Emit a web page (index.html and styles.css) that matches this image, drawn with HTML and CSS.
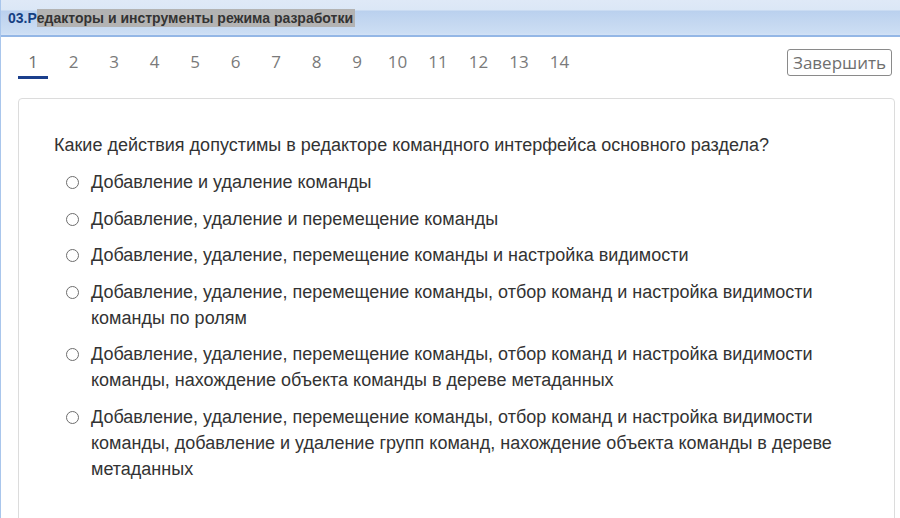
FILE: index.html
```html
<!DOCTYPE html>
<html lang="ru">
<head>
<meta charset="utf-8">
<link rel="stylesheet" href="styles.css">
</head>
<body>
<div class="frame">
  <div class="header">
    <div class="title"><span class="num">03.Р</span><span class="hl">едакторы и инструменты режима разработки</span></div>
  </div>
  <div class="nav">
    <div class="tabs">
      <span class="tab active">1</span>
      <span class="tab">2</span>
      <span class="tab">3</span>
      <span class="tab">4</span>
      <span class="tab">5</span>
      <span class="tab">6</span>
      <span class="tab">7</span>
      <span class="tab">8</span>
      <span class="tab">9</span>
      <span class="tab">10</span>
      <span class="tab">11</span>
      <span class="tab">12</span>
      <span class="tab">13</span>
      <span class="tab">14</span>
    </div>
    <button class="finish">Завершить</button>
  </div>
  <div class="card">
    <div class="question">Какие действия допустимы в редакторе командного интерфейса основного раздела?</div>
    <ul class="options">
      <li class="opt"><span class="radio"></span><span class="text">Добавление и удаление команды</span></li>
      <li class="opt"><span class="radio"></span><span class="text">Добавление, удаление и перемещение команды</span></li>
      <li class="opt"><span class="radio"></span><span class="text">Добавление, удаление, перемещение команды и настройка видимости</span></li>
      <li class="opt"><span class="radio"></span><span class="text">Добавление, удаление, перемещение команды, отбор команд и настройка видимости команды по ролям</span></li>
      <li class="opt"><span class="radio"></span><span class="text">Добавление, удаление, перемещение команды, отбор команд и настройка видимости команды, нахождение объекта команды в дереве метаданных</span></li>
      <li class="opt"><span class="radio"></span><span class="text">Добавление, удаление, перемещение команды, отбор команд и настройка видимости команды, добавление и удаление групп команд, нахождение объекта команды в дереве метаданных</span></li>
    </ul>
  </div>
</div>
</body>
</html>
```
FILE: styles.css
```css
html, body {
  margin: 0;
  padding: 0;
  background: #fff;
  overflow: hidden;
}
.frame {
  width: 900px;
  height: 518px;
  border-left: 1px solid #a9c6ec;
  box-sizing: border-box;
}
.header {
  height: 37px;
  box-sizing: border-box;
  border-bottom: 2px solid #94b7e6;
  background: linear-gradient(to bottom, #dfe9f7 0, #dbe7f6 10px, #b9d0ee 11px, #bcd2ef 13px, #c6d9f1 25px, #ccdef4 33px, #d4e3f6 35px);
  display: flex;
  align-items: flex-start;
  padding: 9px 0 0 7px;
}
.title {
  font-family: "Liberation Sans", Arial, sans-serif;
  font-weight: bold;
  font-size: 14px;
  line-height: 18px;
  display: flex;
}
.num {
  color: #153f82;
}
.hl {
  background: #b3b3b3;
  color: #333;
  padding-right: 2px;
}
.nav {
  display: flex;
  justify-content: space-between;
  align-items: flex-start;
  padding: 13px 8px 0 17px;
  height: 61px;
  box-sizing: border-box;
}
.tabs {
  display: flex;
  gap: 10.5px;
}
.tab {
  width: 30px;
  text-align: center;
  font-family: "Open Sans", sans-serif;
  font-size: 17px;
  line-height: 24px;
  color: #7a7a7a;
  padding-bottom: 2px;
  border-bottom: 3px solid transparent;
}
.tab.active {
  border-bottom-color: #1b3f8c;
  color: #6e6e6e;
}
.finish {
  font-family: "Open Sans", sans-serif;
  font-size: 17px;
  color: #6f6f6f;
  background: #fff;
  border: 1px solid #8a8a8a;
  border-radius: 3px;
  height: 27px;
  padding: 0 5px;
  line-height: 23px;
  margin: -1px 0 0;
}
.card {
  margin-left: 17px;
  width: 877px;
  height: 430px;
  box-sizing: border-box;
  border: 1px solid #dcdcdc;
  border-radius: 4px;
  padding: 33px 20px 0 35px;
  font-family: "Liberation Sans", Arial, sans-serif;
  color: #333;
  font-size: 18px;
}
.question {
  line-height: 26px;
  margin-bottom: 11px;
}
.options {
  list-style: none;
  margin: 0;
  padding: 0 0 0 11px;
  display: flex;
  flex-direction: column;
  gap: 10.5px;
}
.opt {
  display: flex;
  align-items: flex-start;
  line-height: 26px;
}
.radio {
  flex: none;
  width: 11px;
  height: 11px;
  border: 1px solid #6d6d6d;
  border-radius: 50%;
  margin: 7px 12px 0 1px;
}
.text {
  flex: 1;
}
```
